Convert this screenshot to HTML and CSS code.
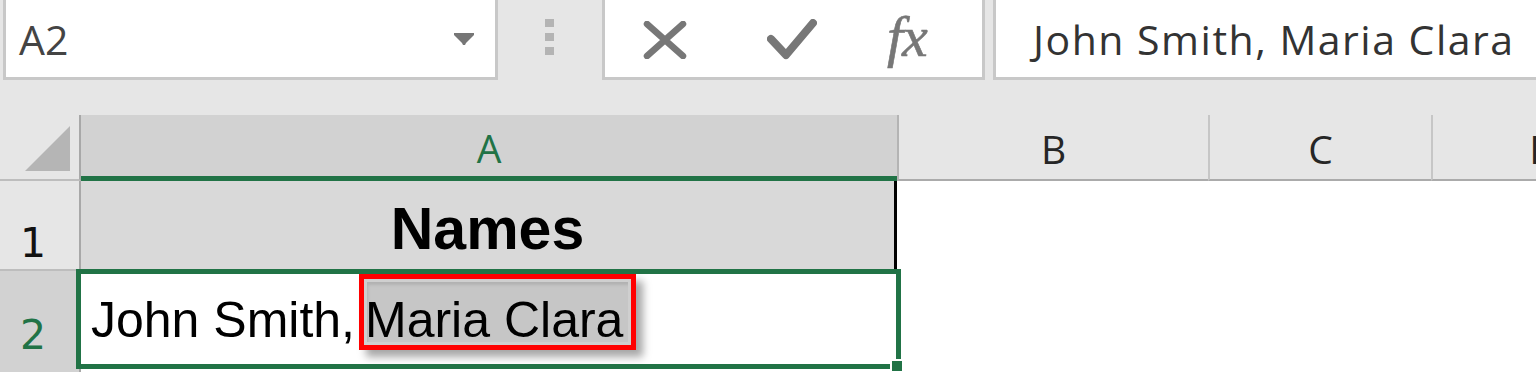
FILE: index.html
```html
<!DOCTYPE html>
<html>
<head>
<meta charset="utf-8">
<link rel="stylesheet" href="styles.css">
</head>
<body>
<div class="toolbar">
  <div class="namebox">
    <span class="ref">A2</span>
    <svg class="dd" width="20" height="12" viewBox="0 0 20 12"><polygon points="0,0 20,0 20,2 12,10 11,12 9,12 8,10 0,2" fill="#767676"/></svg>
  </div>
  <div class="grip"><i></i><i></i><i></i></div>
  <div class="fxbox">
    <svg class="ico-x" width="44" height="38" viewBox="0 0 44 38"><path d="M4 3 L40 35 M40 3 L4 35" stroke="#777" stroke-width="6.5" stroke-linecap="round" fill="none"/></svg>
    <svg class="ico-check" width="50" height="42" viewBox="0 0 50 42"><polyline points="4,20 19,36 46,4" stroke="#777" stroke-width="8" stroke-linecap="round" stroke-linejoin="round" fill="none"/></svg>
    <span class="fx">fx</span>
  </div>
  <div class="formula">John Smith, Maria Clara</div>
</div>
<div class="spacer"></div>
<div class="sheet">
  <div class="corner"><svg width="45" height="45" viewBox="0 0 45 45"><polygon points="45,0 45,45 0,45" fill="#b5b5b5"/></svg></div>
  <div class="colhead sel">A</div>
  <div class="colhead">B</div>
  <div class="colhead">C</div>
  <div class="colhead">D</div>

  <div class="rowhead r1">1</div>
  <div class="cell a1">Names</div>
  <div class="cell"></div>
  <div class="cell"></div>
  <div class="cell"></div>

  <div class="rowhead r2 sel">2</div>
  <div class="cell a2">John Smith,<span class="hl">Maria Clara</span></div>
  <div class="cell"></div>
  <div class="cell"></div>
  <div class="cell"></div>
</div>
</body>
</html>
```

FILE: styles.css
```css
html, body {
  margin: 0;
  padding: 0;
}
body {
  background: #e6e6e6;
  width: 1536px;
  height: 372px;
  overflow: hidden;
  font-family: "Open Sans", "Noto Sans", sans-serif;
}

/* ---------- formula toolbar ---------- */
.toolbar {
  display: flex;
  height: 80px;
}
.namebox {
  box-sizing: border-box;
  margin-left: 3px;
  width: 495px;
  background: #fff;
  border: 3px solid #c8c8c8;
  border-top: 0;
  display: flex;
  align-items: center;
  padding-left: 13px;
  padding-right: 21px;
}
.ref {
  flex: 1;
  font-size: 41px;
  color: #444;
}
.dd {
  display: block;
}
.grip {
  box-sizing: border-box;
  width: 104px;
  display: flex;
  flex-direction: column;
  align-items: flex-start;
  padding-left: 47px;
  padding-top: 19px;
  gap: 6px;
}
.grip i {
  display: block;
  width: 9px;
  height: 8px;
  background: #b4b4b4;
}
.fxbox {
  box-sizing: border-box;
  width: 383px;
  background: #fff;
  border: 3px solid #c8c8c8;
  border-top: 0;
  display: flex;
  align-items: center;
}
.ico-x {
  display: block;
  margin-left: 38px;
  margin-top: 2px;
}
.ico-check {
  display: block;
  margin-left: 80px;
  margin-top: 2px;
}
.fx {
  margin-left: 70px;
  font-family: "Liberation Serif", "DejaVu Serif", serif;
  font-style: italic;
  font-size: 58px;
  color: #777;
  letter-spacing: -1px;
  margin-top: -4px;
  -webkit-text-stroke: 0.6px #777;
}
.formula {
  box-sizing: border-box;
  margin-left: 8px;
  flex: 1;
  background: #fff;
  border: 3px solid #c8c8c8;
  border-top: 0;
  border-right: 0;
  display: flex;
  align-items: center;
  padding-left: 37px;
  font-size: 41px;
  letter-spacing: 1.5px;
  color: #333;
  white-space: nowrap;
}
.spacer {
  height: 35px;
}

/* ---------- sheet grid ---------- */
.sheet {
  display: grid;
  grid-template-columns: 81px 816px 311px 223px 223px;
  grid-template-rows: 66px 90px 101px;
}
.corner {
  box-sizing: border-box;
  background: #e6e6e6;
  border-right: 2px solid #a8a8a8;
  border-bottom: 2px solid #bdbdbd;
  display: flex;
  justify-content: flex-end;
  align-items: flex-end;
  padding-right: 9px;
  padding-bottom: 8px;
}
.corner svg {
  display: block;
}
.colhead {
  box-sizing: border-box;
  background: #e6e6e6;
  border-bottom: 2px solid #ababab;
  border-left: 2px solid #c6c6c6;
  display: flex;
  justify-content: center;
  align-items: center;
  padding-top: 2px;
  font-size: 39px;
  color: #262626;
  line-height: 1;
}
.colhead.sel {
  background: #d2d2d2;
  border-left: 0;
  border-bottom: 5px solid #217346;
  color: #217346;
  padding-top: 4px;
}
.colhead.sel + .colhead {
  border-left-color: #b4b4b4;
}
.rowhead {
  box-sizing: border-box;
  background: #e6e6e6;
  border-right: 2px solid #a8a8a8;
  display: flex;
  justify-content: center;
  align-items: flex-end;
  padding-right: 13px;
  font-family: "DejaVu Sans", sans-serif;
  font-size: 41px;
  line-height: 41px;
  color: #111;
}
.rowhead.r1 {
  border-bottom: 2px solid #bdbdbd;
  padding-bottom: 5px;
}
.rowhead.r2 {
  padding-bottom: 16px;
}
.rowhead.sel {
  background: #d2d2d2;
  color: #217346;
}
.cell {
  background: #fff;
  font-family: "Liberation Sans", Arial, sans-serif;
  color: #000;
}
.cell.a1 {
  box-sizing: border-box;
  background: #d9d9d9;
  border-right: 3px solid #000;
  display: flex;
  justify-content: center;
  align-items: flex-end;
  padding-bottom: 12px;
  font-weight: bold;
  font-size: 59px;
  line-height: 59px;
}
.cell.a2 {
  position: relative;
  box-sizing: border-box;
  padding-top: 3px;
  padding-left: 10px;
  font-size: 50px;
  line-height: 50px;
  white-space: nowrap;
}
.cell.a2::after {
  content: "";
  position: absolute;
  top: -2px;
  left: -5px;
  right: -4px;
  bottom: 3px;
  border: 5px solid #217346;
  pointer-events: none;
}
.cell.a2::before {
  content: "";
  position: absolute;
  right: -7px;
  bottom: -1px;
  width: 10px;
  height: 10px;
  background: #217346;
  border: 2px solid #fff;
  z-index: 2;
}
.hl {
  display: inline-block;
  margin-left: 4px;
  padding: 16px 8px 0 1px;
  border: 5px solid #ff0000;
  background: #c6c6c6;
  box-shadow: inset 0 0 0 3px #cfcfcf, inset 6px 8px 3px -2px rgba(0, 0, 0, 0.1), 7px 7px 8px rgba(0, 0, 0, 0.35);
}
```
